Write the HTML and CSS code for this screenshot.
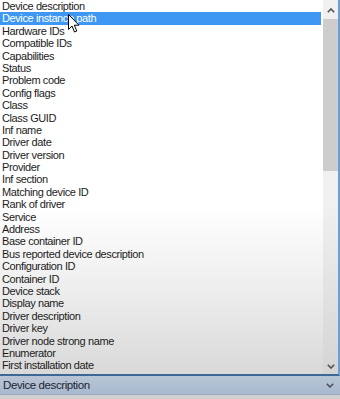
FILE: index.html
```html
<!DOCTYPE html>
<html>
<head>
<meta charset="utf-8">
<link rel="stylesheet" href="styles.css">
</head>
<body>
<div class="dropdown">
  <div class="list">
    <div class="items">
      <div class="item">Device description</div>
      <div class="item selected">Device instance path</div>
      <div class="item">Hardware IDs</div>
      <div class="item">Compatible IDs</div>
      <div class="item">Capabilities</div>
      <div class="item">Status</div>
      <div class="item">Problem code</div>
      <div class="item">Config flags</div>
      <div class="item">Class</div>
      <div class="item">Class GUID</div>
      <div class="item">Inf name</div>
      <div class="item">Driver date</div>
      <div class="item">Driver version</div>
      <div class="item">Provider</div>
      <div class="item">Inf section</div>
      <div class="item">Matching device ID</div>
      <div class="item">Rank of driver</div>
      <div class="item">Service</div>
      <div class="item">Address</div>
      <div class="item">Base container ID</div>
      <div class="item">Bus reported device description</div>
      <div class="item">Configuration ID</div>
      <div class="item">Container ID</div>
      <div class="item">Device stack</div>
      <div class="item">Display name</div>
      <div class="item">Driver description</div>
      <div class="item">Driver key</div>
      <div class="item">Driver node strong name</div>
      <div class="item">Enumerator</div>
      <div class="item">First installation date</div>
      <svg class="cursor" width="12" height="19" viewBox="0 0 12 19">
        <path d="M0.5 0.5 L0.5 15.5 L4 12 L6.5 18 L8.8 17 L6.3 11.2 L11 11.2 Z" fill="#ffffff" stroke="#000000" stroke-width="1"/>
      </svg>
    </div>
    <div class="scrollbar">
      <div class="sb-btn sb-up">
        <svg width="8" height="5" viewBox="0 0 8 5"><path d="M0.8 4.2 L4 1 L7.2 4.2" fill="none" stroke="#505050" stroke-width="1.6"/></svg>
      </div>
      <div class="sb-thumb"></div>
      <div class="sb-track"></div>
      <div class="sb-btn sb-down">
        <svg width="8" height="5" viewBox="0 0 8 5"><path d="M0.8 0.8 L4 4 L7.2 0.8" fill="none" stroke="#505050" stroke-width="1.6"/></svg>
      </div>
    </div>
  </div>
  <div class="combo">
    <span class="combo-text">Device description</span>
    <svg width="8" height="5" viewBox="0 0 8 5"><path d="M0.8 0.8 L4 4 L7.2 0.8" fill="none" stroke="#4a5260" stroke-width="1.6"/></svg>
  </div>
</div>
</body>
</html>
```
FILE: styles.css
```css
html, body {
  margin: 0;
  padding: 0;
}
body {
  background: #cfcfcf;
  width: 340px;
  height: 399px;
  overflow: hidden;
  font-family: "Liberation Sans", Arial, sans-serif;
}
.dropdown {
  display: flex;
  flex-direction: column;
  width: 340px;
}
.list {
  display: flex;
  height: 374px;
  border-right: 2px solid #6e9fd2;
  border-bottom: 2px solid #3c6896;
  background: linear-gradient(to bottom, #ffffff 0%, #ffffff 55%, #ededed 78%, #d9d9d9 100%);
}
.items {
  position: relative;
  flex: 1;
  display: flex;
  flex-direction: column;
}
.item {
  height: 12.4px;
  line-height: 12.4px;
  font-size: 11px;
  color: #1c1c1c;
  padding-left: 2px;
  white-space: nowrap;
  letter-spacing: -0.4px;
}
.item.selected {
  background: #3d97f3;
  color: #ffffff;
  margin-right: 1px;
}
.cursor {
  position: absolute;
  left: 68px;
  top: 14px;
}
.scrollbar {
  width: 15px;
  margin-left: 1px;
  display: flex;
  flex-direction: column;
  padding-top: 2px;
  background: linear-gradient(to bottom, #f0f0f0 0%, #f0f0f0 55%, #e2e2e2 78%, #d4d4d4 100%);
}
.sb-btn {
  display: flex;
  align-items: center;
  justify-content: center;
}
.sb-up {
  height: 17px;
  background: #f0f0f0;
}
.sb-thumb {
  height: 152px;
  background: #cdcdcd;
}
.sb-track {
  flex: 1;
}
.sb-down {
  height: 16px;
}
.combo {
  height: 18px;
  display: flex;
  align-items: center;
  justify-content: space-between;
  padding: 0 6px 0 3px;
  background: linear-gradient(to bottom, #b7c5d6 0%, #a9b9ce 100%);
  border-bottom: 1px solid #9aa9bd;
}
.combo-text {
  font-size: 11.5px;
  color: #1e2430;
  letter-spacing: -0.4px;
}
```
